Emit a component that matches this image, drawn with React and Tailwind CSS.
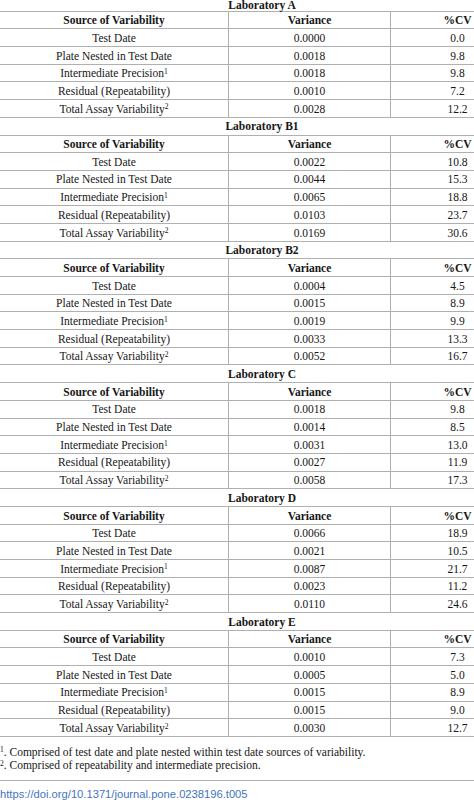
import React from "react";

const labs = [
  { name: "Laboratory A", rows: [["0.0000", "0.0"], ["0.0018", "9.8"], ["0.0018", "9.8"], ["0.0010", "7.2"], ["0.0028", "12.2"]] },
  { name: "Laboratory B1", rows: [["0.0022", "10.8"], ["0.0044", "15.3"], ["0.0065", "18.8"], ["0.0103", "23.7"], ["0.0169", "30.6"]] },
  { name: "Laboratory B2", rows: [["0.0004", "4.5"], ["0.0015", "8.9"], ["0.0019", "9.9"], ["0.0033", "13.3"], ["0.0052", "16.7"]] },
  { name: "Laboratory C", rows: [["0.0018", "9.8"], ["0.0014", "8.5"], ["0.0031", "13.0"], ["0.0027", "11.9"], ["0.0058", "17.3"]] },
  { name: "Laboratory D", rows: [["0.0066", "18.9"], ["0.0021", "10.5"], ["0.0087", "21.7"], ["0.0023", "11.2"], ["0.0110", "24.6"]] },
  { name: "Laboratory E", rows: [["0.0010", "7.3"], ["0.0005", "5.0"], ["0.0015", "8.9"], ["0.0015", "9.0"], ["0.0030", "12.7"]] },
];

const sources = [
  <>Test Date</>,
  <>Plate Nested in Test Date</>,
  <>Intermediate Precision<sup className="text-[7.5px] relative -top-[2px]">1</sup></>,
  <>Residual (Repeatability)</>,
  <>Total Assay Variability<sup className="text-[7.5px] relative -top-[2px]">2</sup></>,
];

function Row({ a, b, c, bold }) {
  return (
    <div className={`grid grid-cols-[229px_162px_133px] h-[17.69px] border-b border-[#b0b0b0] ${bold ? "font-bold" : ""}`}>
      <div className="flex items-center justify-center border-r border-[#b0b0b0] pt-[2px]">{a}</div>
      <div className="flex items-center justify-center border-r border-[#b0b0b0] pt-[2px]">{b}</div>
      <div className="flex items-center justify-center pt-[2px]">{c}</div>
    </div>
  );
}

export default function App() {
  return (
    <div className="w-[474px] h-[805px] overflow-hidden bg-white text-[#161616] text-[11.5px] leading-none" style={{ fontFamily: '"Liberation Serif", "Times New Roman", serif' }}>
      <div className="w-[524px]">
        {labs.map((lab, li) => (
          <div key={lab.name}>
            <div className={`${li === 0 ? "h-[11.69px]" : "h-[17.69px] pt-[2px]"} border-b border-[#b0b0b0] flex items-center justify-center font-bold`}>{lab.name}</div>
            <Row a="Source of Variability" b="Variance" c="%CV" bold />
            {lab.rows.map((r, i) => (
              <Row key={i} a={sources[i]} b={r[0]} c={r[1]} />
            ))}
          </div>
        ))}
      </div>
      <div className="mt-[9px] leading-[13.5px]">
        <div><sup className="text-[7.5px]">1</sup>. Comprised of test date and plate nested within test date sources of variability.</div>
        <div><sup className="text-[7.5px]">2</sup>. Comprised of repeatability and intermediate precision.</div>
      </div>
      <div className="mt-[7px] border-t border-[#b0b0b0] pt-[8px] text-[11.2px] text-[#3f76bd]" style={{ fontFamily: '"Liberation Sans", Arial, sans-serif' }}>
        https://doi.org/10.1371/journal.pone.0238196.t005
      </div>
    </div>
  );
}
